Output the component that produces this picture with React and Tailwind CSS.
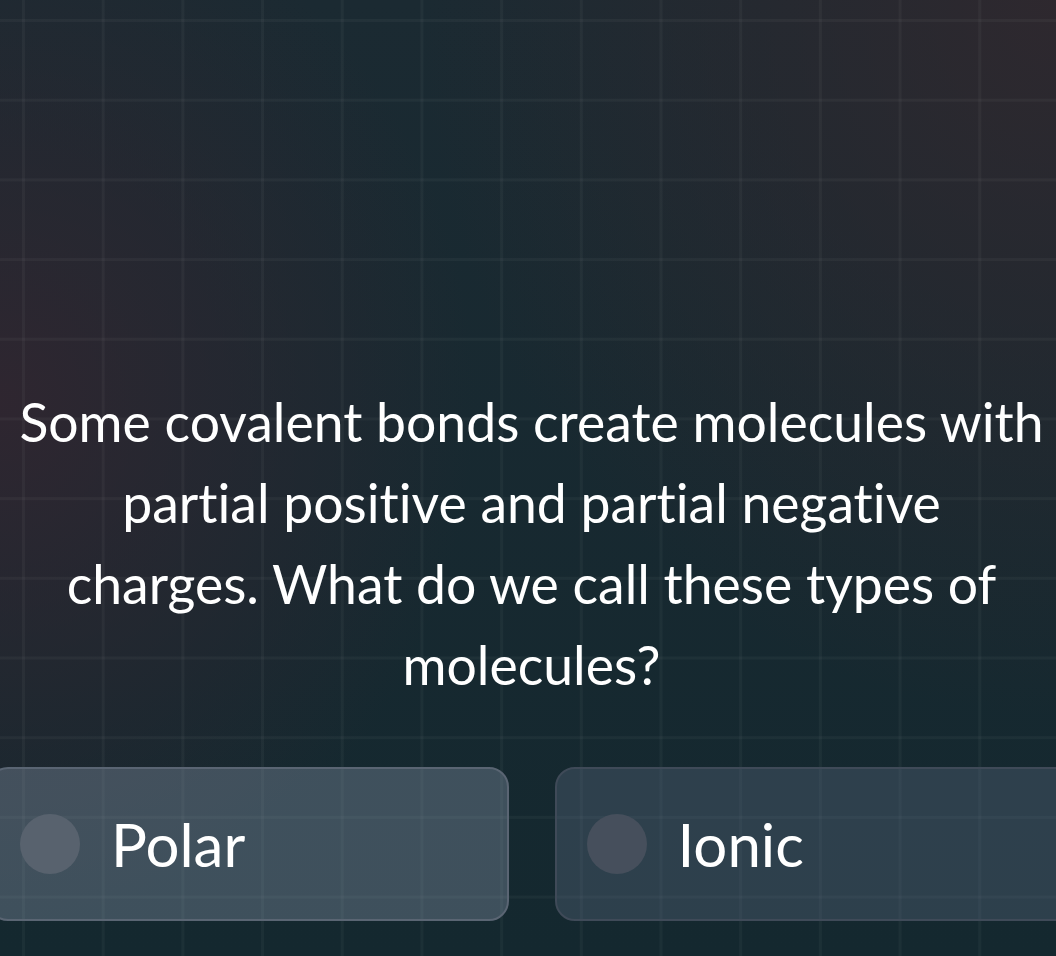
import React from 'react';

const options = [
  { label: 'Polar', active: true },
  { label: 'Ionic', active: false },
];

const lines = [
  'Some covalent bonds create molecules with',
  'partial positive and partial negative',
  'charges. What do we call these types of',
  'molecules?',
];

const OptionCard = ({ label, active }) => {
  return (
    <button
      type="button"
      className={
        active
          ? 'flex h-[154px] items-center gap-[31px] rounded-[20px] border-2 border-[#5a6573] bg-[rgba(148,163,184,0.33)] pl-[30px] text-left'
          : 'flex h-[154px] items-center gap-[31px] rounded-[20px] border-2 border-[#3f4a58] bg-[rgba(100,116,139,0.32)] pl-[30px] text-left'
      }
    >
      <span
        className={
          active
            ? 'h-[60px] w-[60px] shrink-0 rounded-full bg-[#58626e]'
            : 'h-[60px] w-[60px] shrink-0 rounded-full bg-[#464f5c]'
        }
      />
      <span className="text-[60px] leading-none text-white">{label}</span>
    </button>
  );
};

const App = () => {
  return (
    <div className="h-[956px] overflow-hidden bg-[#16272f] bg-[radial-gradient(ellipse_45%_55%_at_0%_42%,rgba(48,38,48,0.95),transparent),radial-gradient(ellipse_60%_75%_at_100%_0%,rgba(48,40,46,0.9),transparent),linear-gradient(180deg,#1b2a32,#14282f)] font-['Lato',sans-serif] [font-variant-ligatures:none]">
      <div className="flex h-full flex-col justify-end bg-[linear-gradient(to_right,rgba(255,255,255,0.035)_3px,transparent_3px),linear-gradient(to_bottom,rgba(255,255,255,0.035)_3px,transparent_3px)] bg-[size:79.7px_79.7px] bg-[position:22px_19px] pb-[35px]">
        <div className="ml-[-12px] w-[1087px]">
          <p className="mx-[31px] mb-[62px] text-center text-[53.5px] leading-[81px] text-white">
            {lines.map((l, i) => (
              <React.Fragment key={i}>
                {l}
                {i < lines.length - 1 && <br />}
              </React.Fragment>
            ))}
          </p>
          <div className="grid grid-cols-2 gap-[46px]">
            {options.map((o) => (
              <OptionCard key={o.label} label={o.label} active={o.active} />
            ))}
          </div>
        </div>
      </div>
    </div>
  );
};

export default App;
